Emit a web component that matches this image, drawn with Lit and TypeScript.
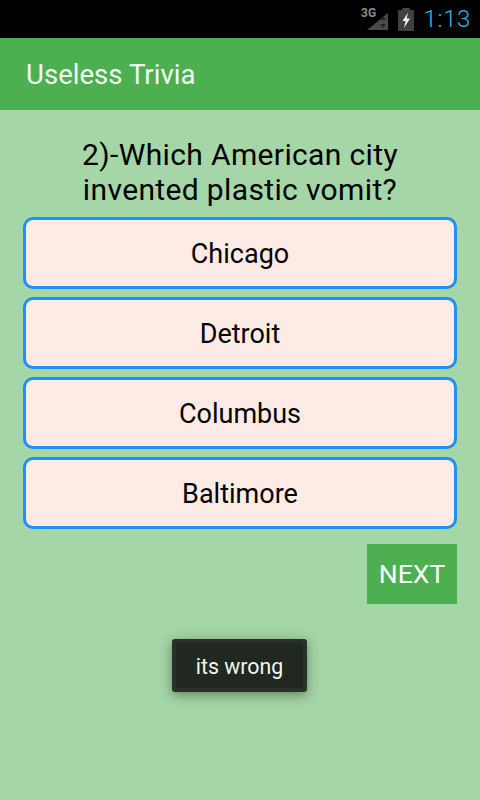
import { LitElement, html, css } from "lit";
import { customElement } from "lit/decorators.js";

@customElement("app-root")
export class AppRoot extends LitElement {
  static styles = css`
    :host {
      display: block;
      width: 480px;
      height: 800px;
      position: relative;
      overflow: hidden;
      background: #a5d6a7;
      font-family: Roboto, "Liberation Sans", sans-serif;
      color: #000;
    }
    .status {
      height: 38px;
      background: #000;
      display: flex;
      align-items: center;
      justify-content: flex-end;
      padding-right: 9px;
      box-sizing: border-box;
    }
    .signal { display: block; margin-right: 9px; }
    .batt { display: block; margin-right: 10px; }
    .clock { color: #33b5e5; font-size: 24px; letter-spacing: 0.6px; line-height: 38px; font-weight: 300; }
    .bar {
      height: 72px;
      background: #4caf50;
      display: flex;
      align-items: center;
      padding-left: 26px;
      color: #f4faf4;
      font-size: 27.6px;
    }
    .content {
      padding: 27px 23px 0;
      display: flex;
      flex-direction: column;
    }
    .q {
      font-size: 30px;
      line-height: 35px;
      text-align: center;
      margin: 0 0 10px;
      font-weight: 400;
      letter-spacing: 0.36px;
    }
    .answers { display: flex; flex-direction: column; gap: 8px; }
    .answer {
      height: 72px;
      box-sizing: border-box;
      border: 3px solid #1e90ff;
      border-radius: 10px;
      background: #ffebe6;
      display: flex;
      align-items: center;
      justify-content: center;
      font-size: 27px;
      padding-top: 2px;
    }
    .next {
      align-self: flex-end;
      margin-top: 15px;
      width: 90px;
      height: 60px;
      box-sizing: border-box;
      padding-bottom: 2px;
      background: #4caf50;
      color: #fff;
      display: flex;
      align-items: center;
      justify-content: center;
      font-size: 26.5px;
    }
    .toast {
      position: absolute;
      left: 172px;
      top: 639px;
      width: 135px;
      height: 53px;
      box-sizing: border-box;
      padding-top: 2px;
      background: #20281f;
      border: 4px solid #2a302a;
      border-radius: 3px;
      color: #f2f4f2;
      font-size: 21.3px;
      display: flex;
      align-items: center;
      justify-content: center;
      box-shadow: 0 3px 12px rgba(30, 50, 30, 0.5);
    }
  `;

  render() {
    return html`
      <div class="status">
        <svg class="signal" width="29" height="26" viewBox="0 0 29 26">
          <path d="M7 24 L28 7 V24 Z" fill="#4a4a4a" />
          <path d="M23 10 l3 4 h-6 z M23 22 l-3 -4 h6 z" fill="#222" />
          <text x="1" y="11" font-family="Roboto, sans-serif" font-size="12" font-weight="700" fill="#8a8a8a">3G</text>
        </svg>
        <svg class="batt" width="16" height="23" viewBox="0 0 16 23">
          <rect x="4.5" y="0" width="7" height="3" fill="#4a4a4a" />
          <rect x="0" y="2" width="16" height="21" rx="1" fill="#404040" />
          <path d="M10 4.5 L4.5 13 H7.5 L6 20 L12 10.5 H8.7 Z" fill="#f0f0f0" />
        </svg>
        <span class="clock">1:13</span>
      </div>
      <div class="bar">Useless Trivia</div>
      <div class="content">
        <h1 class="q">2)-Which American city<br />invented plastic vomit?</h1>
        <div class="answers">
          <div class="answer">Chicago</div>
          <div class="answer">Detroit</div>
          <div class="answer">Columbus</div>
          <div class="answer">Baltimore</div>
        </div>
        <div class="next">NEXT</div>
      </div>
      <div class="toast">its wrong</div>
    `;
  }
}
